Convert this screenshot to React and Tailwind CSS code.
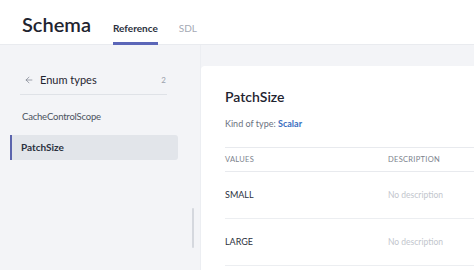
import { ArrowLeft } from "lucide-react";

const rows = [
  { name: "SMALL", desc: "No description" },
  { name: "LARGE", desc: "No description" },
];

export default function App() {
  return (
    <div
      className="w-[474px] h-[270px] overflow-hidden bg-white text-[#1f2430]"
      style={{ fontFamily: "Lato, 'Noto Sans', sans-serif" }}
    >
      <header className="h-[45px] flex items-baseline px-[22px] pt-[14px] border-b border-[#e9ebef]">
        <div className="text-[20px] leading-[20px] font-semibold mr-[22px]">Schema</div>
        <div className="flex gap-[21px] text-[10px] leading-[10px]">
          <div className="font-bold text-[#2b3140] pb-[9px] border-b-[3px] border-[#5b66b8]">Reference</div>
          <div className="text-[#a4a9b4] pb-[9px]">SDL</div>
        </div>
      </header>
      <div className="flex h-[225px] bg-[#f3f4f7]">
        <aside className="w-[201px] shrink-0 relative border-r border-[#eceef2] pt-[21px]">
          <div className="ml-[20px] mr-[33px] h-[29px] flex items-center border-b border-[#dfe2e7] text-[11px]">
            <ArrowLeft className="w-[10px] h-[10px] text-[#6b7280] ml-[4px] mr-[6px]" strokeWidth={1.5} />
            <span className="flex-1">Enum types</span>
            <span className="text-[8px] text-[#9aa0ab] mr-[1px]">2</span>
          </div>
          <div className="mt-[12px] px-[22px] text-[9.5px] tracking-[-0.2px] text-[#4b5260] h-[20px] flex items-center">
            CacheControlScope
          </div>
          <div className="mt-[8px] ml-[10px] w-[168px] h-[25px] rounded-r-[3px] bg-[#e2e5ea] border-l-[2px] border-[#5b64ad] flex items-center pl-[9px] text-[10px] font-bold text-[#2b3140]">
            PatchSize
          </div>
          <div className="absolute left-[192px] top-[163px] w-[2px] h-[40px] rounded bg-[#d5d8de]" />
        </aside>
        <div className="flex-1 pt-[21px]">
          <main className="h-full bg-white rounded-tl-[4px] pl-[24px] pt-[24px]">
            <h1 className="text-[14px] font-semibold leading-none">PatchSize</h1>
            <div className="mt-[14px] text-[9px] leading-[12px] text-[#6b7280]">
              Kind of type: <span className="font-bold text-[#3a6fc0]">Scalar</span>
            </div>
            <div className="mt-[17px] border-t border-[#e8eaee]">
              <div className="h-[24px] flex items-center text-[7.5px] tracking-[0.3px] text-[#7b818c] border-b border-[#e8eaee]">
                <div className="w-[163px]">VALUES</div>
                <div>DESCRIPTION</div>
              </div>
              {rows.map((r) => (
                <div
                  key={r.name}
                  className="h-[47px] flex items-center text-[9px] border-b border-[#eceef1]"
                >
                  <div className="w-[163px] text-[#2b3140]">{r.name}</div>
                  <div className="text-[8.5px] text-[#c2c6cd]">{r.desc}</div>
                </div>
              ))}
            </div>
          </main>
        </div>
      </div>
    </div>
  );
}
